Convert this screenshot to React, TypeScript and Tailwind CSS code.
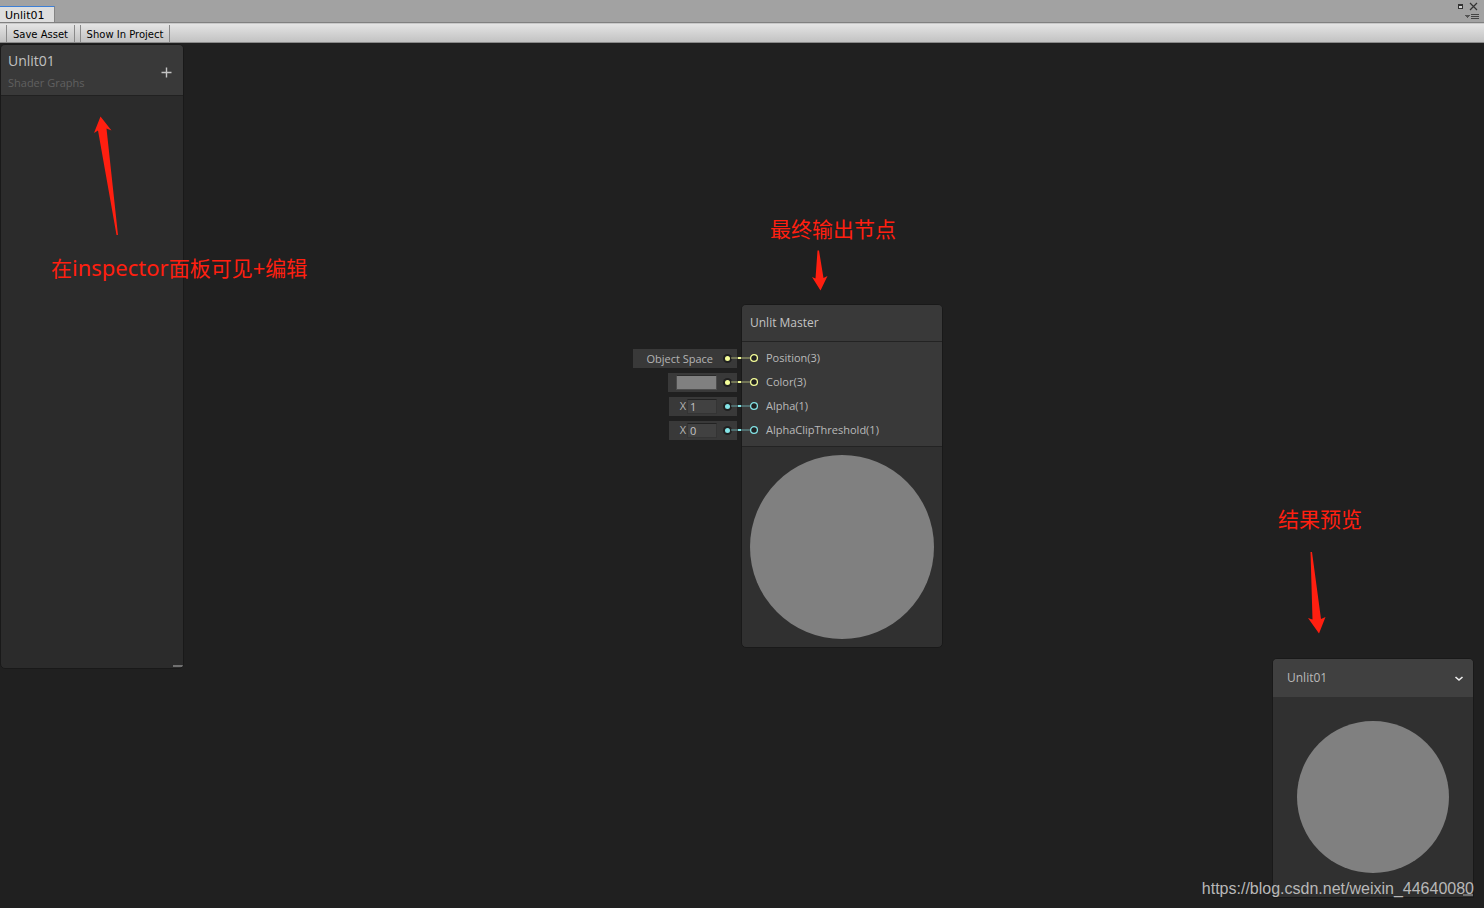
import React from "react";
import clsx from "clsx";

const ports = [
  { id: 1, name: "Position(3)", type: "vector", slot: "space" },
  { id: 2, name: "Color(3)", type: "vector", slot: "color" },
  { id: 3, name: "Alpha(1)", type: "float", slot: "x", value: "1" },
  { id: 4, name: "AlphaClipThreshold(1)", type: "float", slot: "x", value: "0" },
];

const notes = [
  {
    id: 1,
    text: (
      <>
        在<span className="text-[22px]">inspector</span>面板可见
        <span className="text-[22px]">+</span>编辑
      </>
    ),
    place: "left-[51px] top-[208px]",
    arrowPlace: "left-[94px] top-[73px]",
    width: 25,
    height: 120,
    points: "6.5,0.5 17.5,14.5 12.5,12.5 24,119 22.5,119 4,14.5 0,17",
  },
  {
    id: 2,
    text: "最终输出节点",
    place: "left-[770px] top-[170px]",
    arrowPlace: "left-[812px] top-[207px]",
    width: 16,
    height: 42,
    points: "5.5,0.5 7,0.5 11.5,28 15.5,26 8.5,40.5 0,27 3.5,28.5",
  },
  {
    id: 3,
    text: "结果预览",
    place: "left-[1278px] top-[460px]",
    arrowPlace: "left-[1308px] top-[509px]",
    width: 18,
    height: 82,
    points: "2.5,0 4,0 13,67 17.5,65 11,81.5 0,66 4.5,67.5",
  },
];

const TabBar = () => {
  return (
    <header className="flex h-[23px] items-end justify-between border-b border-[#808080] bg-[#a2a2a2]">
      <button className="h-4 border-r border-t border-r-[#858585] border-t-[#3d7fd6] bg-[#dedede] pl-[5px] pr-[10px] pt-px font-['DejaVu_Sans','Liberation_Sans',sans-serif] text-[11px] leading-4 text-black">
        Unlit01
      </button>
      <div className="flex h-full w-8 flex-wrap content-start justify-end gap-x-px pr-[5px]">
        <button aria-label="Maximize" className="flex h-3 w-3 items-center justify-center">
          <svg width="12" height="12" viewBox="0 0 12 12" shapeRendering="crispEdges">
            <rect x="4" y="4" width="5" height="5" fill="#333" />
            <rect x="5" y="6" width="3" height="2" fill="#d0d0d0" />
          </svg>
        </button>
        <button aria-label="Close" className="flex h-3 w-3 items-center justify-center">
          <svg width="12" height="12" viewBox="0 0 12 12">
            <path d="M3 3L10 10M10 3L3 10" stroke="#333" strokeWidth="1.2" fill="none" />
          </svg>
        </button>
        <button aria-label="Tab menu" className="h-2 w-4">
          <svg width="16" height="8" viewBox="0 0 16 8" shapeRendering="crispEdges">
            <path d="M2 3h5v1h-1v1h-1v1h-1v-1h-1v-1h-1z" fill="#555" />
            <path d="M8 2h8v1h-8zM8 4h8v1h-8zM8 6h8v1h-8z" fill="#444" />
          </svg>
        </button>
      </div>
    </header>
  );
};

const Toolbar = () => {
  return (
    <nav className="flex h-5 border-b border-t border-b-[#8a8a8a] border-t-[#c8c8c8] bg-gradient-to-b from-[#e4e4e4] to-[#c2c2c2] pl-[6px] pt-px font-['DejaVu_Sans','Liberation_Sans',sans-serif] text-[10px] leading-[15px] text-black">
      <button className="w-[69px] border-x border-[#8a8a8a] pt-[2px] text-center">
        Save Asset
      </button>
      <button className="ml-[5px] w-[90px] border-x border-[#8a8a8a] pt-[2px] text-center">
        Show In Project
      </button>
    </nav>
  );
};

const Blackboard = () => {
  return (
    <section className="absolute left-0 top-[1px] flex h-[625px] w-[184px] flex-col overflow-hidden rounded-[5px] border border-[#191919] bg-[#2b2b2b]">
      <div className="flex h-[51px] items-center justify-between border-b border-[#212121] bg-[#393939] pl-[7px] pr-[7px]">
        <div className="pt-[2px]">
          <h1 className="text-[14px] leading-6 text-[#c1c1c1]">Unlit01</h1>
          <p className="text-[11px] leading-5 text-[#606060]">Shader Graphs</p>
        </div>
        <button aria-label="Add property" className="flex h-5 w-5 items-center justify-center pt-1">
          <svg width="11" height="11" viewBox="0 0 11 11">
            <path d="M5.5 0.5V10.5M0.5 5.5H10.5" stroke="#c4c4c4" strokeWidth="1.4" />
          </svg>
        </button>
      </div>
      <div className="mb-px mt-auto h-[2px] w-[10px] self-end bg-[#707070]" />
    </section>
  );
};

const Slot = ({ port }: { port: (typeof ports)[number] }) => {
  return (
    <div
      className={clsx(
        "flex h-[19px] items-center justify-end bg-[#393939] pr-[5px]",
        port.slot === "space" && "w-[104px]",
        port.slot === "color" && "w-[69px]",
        port.slot === "x" && "w-[68px]"
      )}
    >
      {port.slot === "space" && (
        <span className="mr-[10px] whitespace-nowrap text-[11px] leading-5 text-[#b4b4b4]">
          Object Space
        </span>
      )}
      {port.slot === "color" && (
        <input
          type="color"
          aria-label="Color"
          defaultValue="#808080"
          className="mr-[6px] h-[15px] w-[41px] appearance-none border border-t-[#2a2a2a] border-[#4c4c4c] bg-[#808080] p-0 [&::-webkit-color-swatch-wrapper]:p-0 [&::-webkit-color-swatch]:border-0"
        />
      )}
      {port.slot === "x" && (
        <label className="flex items-center text-[11px] text-[#b4b4b4]">
          X
          <input
            defaultValue={port.value}
            className="ml-px mr-[6px] h-[15px] w-[30px] border border-[#343434] border-t-[#222] bg-[#414141] px-[2px] text-[11px] leading-3 text-[#c4c4c4] outline-none"
          />
        </label>
      )}
      <span className="flex h-[9px] w-[9px] items-center justify-center rounded-full bg-[#202020]">
        <span
          className={clsx(
            "h-[5px] w-[5px] rounded-full",
            port.type === "vector" ? "bg-[#f6ff9a]" : "bg-[#84e4e7]"
          )}
        />
      </span>
    </div>
  );
};

const Edge = ({ type }: { type: string }) => {
  const color = type === "vector" ? "#f6ff9a" : "#84e4e7";
  return (
    <svg width="28" height="10" viewBox="0 0 28 10" className="absolute -left-3 top-[7px]">
      <path d="M1 5H20" stroke={color} strokeOpacity="0.3" strokeWidth="2" />
      <path d="M8 5H11" stroke={color} strokeWidth="2" />
      <circle cx="24" cy="5" r="3.4" fill="#212121" stroke={color} strokeWidth="1.3" />
    </svg>
  );
};

const MasterNode = () => {
  return (
    <section className="absolute left-[633px] top-[261px] flex">
      <div className="mr-1 flex flex-col items-end gap-[5px] pt-[45px]">
        {ports.map((port) => (
          <Slot key={port.id} port={port} />
        ))}
      </div>
      <div className="w-[202px] rounded-[5px] border border-[#191919] bg-[#303030]">
        <h2 className="h-[37px] rounded-t-[4px] border-b border-[#232323] bg-[#393939] pl-2 text-[12px] leading-9 text-[#c4c4c4]">
          Unlit Master
        </h2>
        <ul className="border-b border-[#232323] bg-[#393939] pb-1 pt-1">
          {ports.map((port) => (
            <li
              key={port.id}
              className="relative h-6 pl-6 text-[11px] leading-6 text-[#b9b9b9]"
            >
              <Edge type={port.type} />
              {port.name}
            </li>
          ))}
        </ul>
        <div className="p-2">
          <div className="aspect-square rounded-full bg-[#808080]" />
        </div>
      </div>
    </section>
  );
};

const Preview = () => {
  return (
    <section className="absolute bottom-[10px] right-[10px] w-[202px] overflow-hidden rounded-t-[5px] border border-[#191919] bg-[#303030]">
      <div className="flex h-[38px] items-center justify-between bg-[#404040] pl-[14px] pr-[9px]">
        <h2 className="text-[12px] text-[#b9b9b9]">Unlit01</h2>
        <button aria-label="Collapse preview">
          <svg width="10" height="8" viewBox="0 0 10 8">
            <path d="M1.5 3L5 6L8.5 3" stroke="#eee" strokeWidth="1.6" fill="none" />
          </svg>
        </button>
      </div>
      <div className="p-6">
        <div className="aspect-square rounded-full bg-[#808080]" />
      </div>
      <div className="absolute bottom-px right-0 h-[2px] w-[10px] bg-[#707070]" />
    </section>
  );
};

export default function App() {
  return (
    <div className="flex min-h-screen flex-col bg-[#202020] font-['Open_Sans','Noto_Sans_CJK_SC',sans-serif]">
      <TabBar />
      <Toolbar />
      <main className="relative flex-1 overflow-hidden">
        <Blackboard />
        <MasterNode />
        <Preview />
        {notes.map((note) => (
          <div
            key={note.id}
            className="font-['Noto_Sans','Noto_Sans_CJK_SC',sans-serif] text-[#ff1f10]"
          >
            <svg
              width={note.width}
              height={note.height}
              viewBox={`0 0 ${note.width} ${note.height}`}
              className={clsx("absolute", note.arrowPlace)}
            >
              <polygon points={note.points} fill="currentColor" />
            </svg>
            <p className={clsx("absolute whitespace-nowrap text-[21px] leading-8", note.place)}>
              {note.text}
            </p>
          </div>
        ))}
        <p className="absolute bottom-[7px] right-[10px] font-['Liberation_Sans',sans-serif] text-[16px] leading-6 text-[#b8b8b8]">
          https://blog.csdn.net/weixin_44640080
        </p>
      </main>
    </div>
  );
}
